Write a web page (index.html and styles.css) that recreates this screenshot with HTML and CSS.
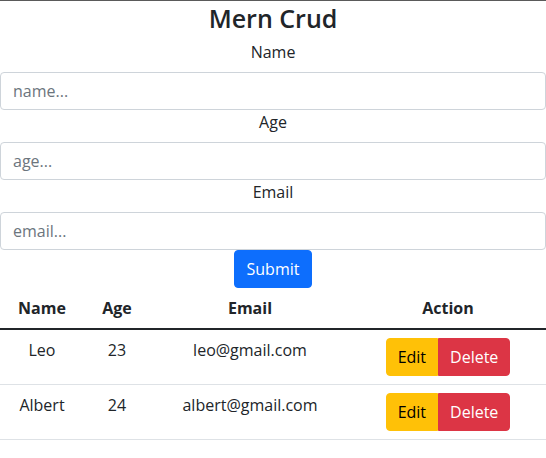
FILE: index.html
```html
<!DOCTYPE html>
<html lang="en">
<head>
<meta charset="utf-8">
<title>Mern Crud</title>
<link rel="stylesheet" href="styles.css">
</head>
<body>
<div class="app">
  <h2 class="title">Mern Crud</h2>
  <form class="form">
    <label class="form-label" for="name">Name</label>
    <input class="form-control" id="name" type="text" placeholder="name...">
    <label class="form-label" for="age">Age</label>
    <input class="form-control" id="age" type="text" placeholder="age...">
    <label class="form-label" for="email">Email</label>
    <input class="form-control" id="email" type="text" placeholder="email...">
    <button type="button" class="btn btn-primary">Submit</button>
  </form>
  <table class="table">
    <colgroup>
      <col class="c-name"><col class="c-age"><col class="c-email"><col class="c-action">
    </colgroup>
    <thead>
      <tr><th>Name</th><th>Age</th><th>Email</th><th>Action</th></tr>
    </thead>
    <tbody>
      <tr>
        <td>Leo</td><td>23</td><td>leo@gmail.com</td>
        <td><div class="btn-group"><button class="btn btn-warning">Edit</button><button class="btn btn-danger">Delete</button></div></td>
      </tr>
      <tr>
        <td>Albert</td><td>24</td><td>albert@gmail.com</td>
        <td><div class="btn-group"><button class="btn btn-warning">Edit</button><button class="btn btn-danger">Delete</button></div></td>
      </tr>
    </tbody>
  </table>
</div>
</body>
</html>
```
FILE: styles.css
```css
* { box-sizing: border-box; }
html, body { margin: 0; padding: 0; }
body {
  font-family: "Open Sans", "Noto Sans", sans-serif;
  font-size: 16px;
  line-height: 1.5;
  color: #212529;
  background: #fff;
  border-top: 1px solid #5a5a5a;
  overflow: hidden;
}
.app { text-align: center; }
.title {
  margin: 0 0 6px;
  padding-top: 2px;
  font-size: 25px;
  line-height: 31px;
  font-weight: 600;
}
.form { display: flex; flex-direction: column; align-items: center; }
.form-label { display: block; margin-bottom: 8px; height: 24px; }
.form-control {
  display: block;
  width: 100%;
  height: 38px;
  padding: 6px 12px;
  font: inherit;
  color: #212529;
  border: 1px solid #ced4da;
  border-radius: 4px;
  background: #fff;
}
.form-control::placeholder { color: #6c757d; }
.btn {
  display: inline-block;
  font: inherit;
  line-height: 24px;
  padding: 6px 12px;
  border: 1px solid transparent;
  border-radius: 4px;
  cursor: pointer;
}
.btn-primary { background: #0d6efd; border-color: #0d6efd; color: #fff; }
.btn-warning { background: #ffc107; border-color: #ffc107; color: #000; }
.btn-danger { background: #dc3545; border-color: #dc3545; color: #fff; }
.btn-group { display: inline-flex; }
.btn-group .btn { padding: 6px 11px; }
.btn-group .btn-warning { border-radius: 4px 0 0 4px; }
.btn-group .btn-danger { border-radius: 0 4px 4px 0; }
.table {
  width: 100%;
  border-collapse: collapse;
  table-layout: fixed;
}
.c-name { width: 84px; }
.c-age { width: 66px; }
.c-email { width: 200px; }
.table th, .table td {
  padding: 8px;
  text-align: center;
  vertical-align: top;
  border-bottom: 1px solid #dee2e6;
}
.table th { font-weight: 700; border-bottom: 2px solid #212529; }
```
